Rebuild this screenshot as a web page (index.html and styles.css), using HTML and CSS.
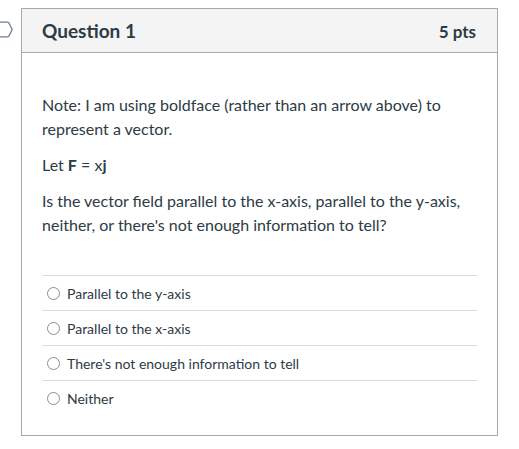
FILE: index.html
```html
<!DOCTYPE html>
<html>
<head>
<meta charset="utf-8">
<link rel="stylesheet" href="styles.css">
</head>
<body>
<div class="page">
  <div class="flag">
    <svg width="13" height="17" viewBox="0 0 13 17" aria-hidden="true">
      <path d="M-4 1.2 H7.6 Q8.3 1.2 8.8 1.8 L12.2 8.5 L8.8 15.2 Q8.3 15.8 7.6 15.8 H-4" fill="none" stroke="#6c7d8f" stroke-width="1.3" stroke-linejoin="round"/>
    </svg>
  </div>
  <div class="question">
    <div class="header">
      <span class="title">Question 1</span>
      <span class="points">5 pts</span>
    </div>
    <div class="body">
      <div class="text">
        <p>Note: I am using boldface (rather than an arrow above) to represent a vector.</p>
        <p>Let <strong>F</strong> = x<strong>j</strong></p>
        <p>Is the vector field parallel to the x-axis, parallel to the y-axis, neither, or there's not enough information to tell?</p>
      </div>
      <div class="answers">
        <label class="answer"><span class="radio"></span><span class="label">Parallel to the y-axis</span></label>
        <label class="answer"><span class="radio"></span><span class="label">Parallel to the x-axis</span></label>
        <label class="answer"><span class="radio"></span><span class="label">There's not enough information to tell</span></label>
        <label class="answer"><span class="radio"></span><span class="label">Neither</span></label>
      </div>
    </div>
  </div>
</div>
</body>
</html>
```
FILE: styles.css
```css
html, body {
  margin: 0;
  padding: 0;
  background: #fff;
}
body {
  font-family: Lato, "Open Sans", sans-serif;
  color: #2d3b45;
}
.page {
  display: flex;
  align-items: flex-start;
  padding-top: 8px;
}
.flag {
  width: 21px;
  flex: none;
  padding-top: 13px;
}
.flag svg {
  display: block;
}
.question {
  width: 475px;
  border: 1px solid #a9a9a9;
}
.header {
  display: flex;
  justify-content: space-between;
  align-items: center;
  height: 43px;
  padding: 0 21px 0 20px;
  background: #f4f4f4;
  border-bottom: 1px solid #a9a9a9;
}
.title {
  font-size: 19px;
  font-weight: 700;
  padding-bottom: 1px;
}
.points {
  font-size: 17px;
  font-weight: 700;
  padding-top: 2px;
}
.body {
  padding: 40px 20px 20px 20px;
}
.text {
  font-size: 16px;
  line-height: 24px;
}
.text p {
  margin: 0 0 12px 0;
}
.text p:last-child {
  margin-bottom: 0;
}
.answers {
  margin-top: 38px;
}
.answer {
  display: flex;
  align-items: center;
  height: 34px;
  border-top: 1px solid #dcdcdc;
  font-size: 14px;
}
.radio {
  width: 11px;
  height: 11px;
  border: 1px solid #8c8c8c;
  border-radius: 50%;
  margin-left: 5px;
  margin-right: 7px;
  flex: none;
}
```
